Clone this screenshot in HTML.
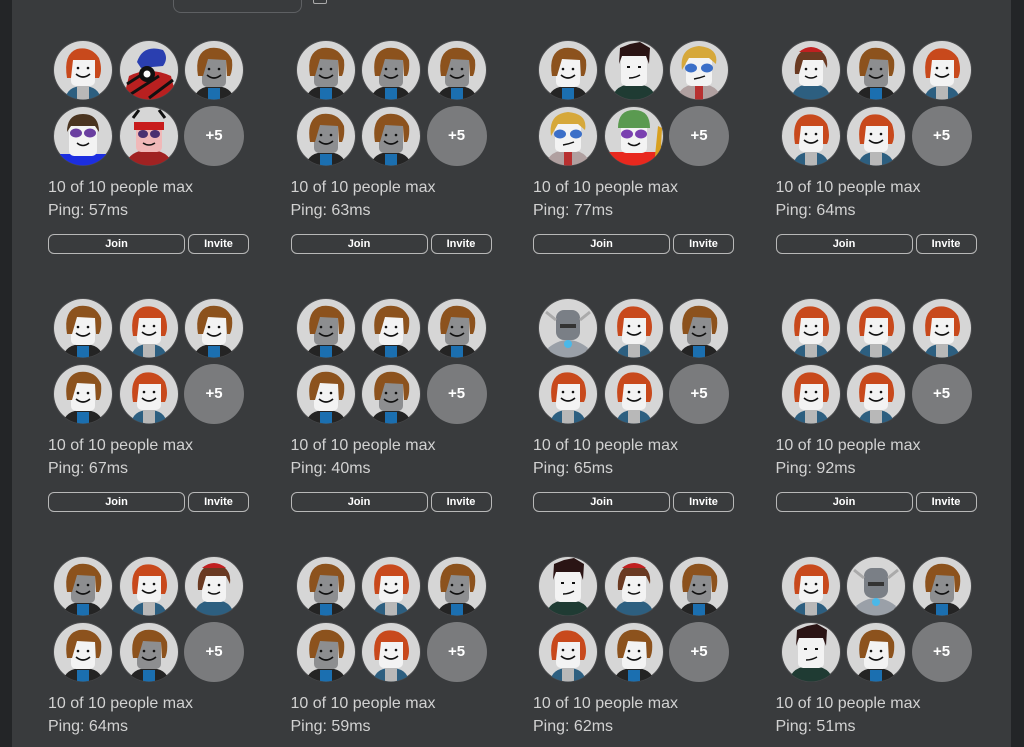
<!DOCTYPE html>
<html><head><meta charset="utf-8"><style>
html,body{margin:0;padding:0;width:1024px;height:747px;overflow:hidden;background:#232527;font-family:"Liberation Sans",sans-serif}
#panel{position:absolute;left:12px;top:0;width:999px;height:747px;background:#393b3d}
#cards{position:absolute;left:0;top:0;width:1024px;height:747px;overflow:hidden}
.card{position:absolute;width:202px;height:260px}
.av{position:absolute;width:60px;height:60px}
.more{position:absolute;width:60px;height:60px;border-radius:50%;background:#7a7b7d;color:#fff;font-size:15px;line-height:60px;text-align:center;font-weight:bold}
.t1,.t2{position:absolute;left:0;color:#d2d2d2;font-size:16px;white-space:nowrap}
.t1{top:178px}.t2{top:201px}
.btn{position:absolute;top:193px;height:20px;border:1px solid #b8b8b8;border-radius:6px;color:#fff;font-size:11px;font-weight:bold;text-align:center;line-height:18px;box-sizing:border-box}
</style></head><body>
<svg width="0" height="0" style="position:absolute">
<defs>
<clipPath id="cc"><circle cx="30" cy="30" r="29.5"/></clipPath>
<g id="base"><circle cx="30" cy="30" r="30" fill="#4a4b4d"/><circle cx="30" cy="30" r="29" fill="#d6d6d6"/></g>
<symbol id="o" viewBox="0 0 60 60"><use href="#base"/><g clip-path="url(#cc)"><path d="M12 60 Q14 46 30 46 Q46 46 48 60Z" fill="#2d5f80"/><rect x="24" y="46" width="12" height="14" fill="#b8b8b8"/><rect x="18" y="14" width="24" height="32" rx="5" fill="#f3f3f3"/><path d="M14 38 Q10 14 24 9 Q38 6 46 18 Q50 30 46 38 L42 38 L42 20 L20 20 L18 38Z" fill="#c8491c"/><path d="M23 34 Q30 40 37 34" stroke="#111" stroke-width="1.6" fill="none"/><circle cx="25" cy="28" r="1.3" fill="#111"/><circle cx="35" cy="28" r="1.3" fill="#111"/></g></symbol>
<symbol id="b" viewBox="0 0 60 60"><use href="#base"/><g clip-path="url(#cc)"><path d="M10 60 Q12 46 30 46 Q48 46 50 60Z" fill="#242424"/><rect x="24" y="48" width="12" height="12" fill="#1b6fb0"/><rect x="18" y="14" width="24" height="33" rx="5" fill="#8d8e90"/><path d="M14 36 Q10 12 26 8 Q42 6 48 20 Q49 30 46 36 L43 36 L42 20 L24 19 L19 36Z" fill="#8c521d"/><path d="M23 35 Q30 41 37 35" stroke="#111" stroke-width="1.6" fill="none"/><circle cx="25" cy="29" r="1.3" fill="#111"/><circle cx="35" cy="29" r="1.3" fill="#111"/></g></symbol>
<symbol id="w" viewBox="0 0 60 60"><use href="#base"/><g clip-path="url(#cc)"><path d="M10 60 Q12 46 30 46 Q48 46 50 60Z" fill="#242424"/><rect x="24" y="48" width="12" height="12" fill="#1b6fb0"/><rect x="18" y="14" width="24" height="33" rx="5" fill="#f3f3f3"/><path d="M14 36 Q10 12 26 8 Q42 6 48 20 Q49 30 46 36 L43 36 L42 20 L24 19 L19 36Z" fill="#8c521d"/><path d="M23 35 Q30 41 37 35" stroke="#111" stroke-width="1.6" fill="none"/><circle cx="25" cy="29" r="1.3" fill="#111"/><circle cx="35" cy="29" r="1.3" fill="#111"/></g></symbol>
<symbol id="x" viewBox="0 0 60 60"><use href="#base"/><g clip-path="url(#cc)"><path d="M4 60 L10 36 Q30 26 52 36 L58 60Z" fill="#b82020"/><path d="M8 44 L30 30 M12 54 L40 36 M30 58 L54 40" stroke="#111" stroke-width="3"/><path d="M18 22 Q24 4 44 10 Q50 18 44 26 L22 28Z" fill="#2a3fb0"/><circle cx="28" cy="34" r="8" fill="#111"/><circle cx="28" cy="34" r="3.5" fill="#fff"/></g></symbol>
<symbol id="s" viewBox="0 0 60 60"><use href="#base"/><g clip-path="url(#cc)"><rect x="0" y="48" width="60" height="12" fill="#1c2ee0"/><rect x="16" y="14" width="28" height="36" rx="5" fill="#f3f3f3"/><path d="M14 26 Q14 8 30 8 Q46 8 46 26 L42 20 L18 20Z" fill="#4a3420"/><ellipse cx="23" cy="27" rx="6" ry="4.5" fill="#6a3fa0"/><ellipse cx="37" cy="27" rx="6" ry="4.5" fill="#6a3fa0"/><path d="M24 37 Q30 42 36 37" stroke="#111" stroke-width="1.5" fill="none"/></g></symbol>
<symbol id="p" viewBox="0 0 60 60"><use href="#base"/><g clip-path="url(#cc)"><path d="M6 60 Q10 44 30 44 Q50 44 54 60Z" fill="#a02222"/><rect x="17" y="16" width="26" height="30" rx="5" fill="#f0b8b8"/><rect x="15" y="16" width="30" height="8" fill="#c81c1c"/><path d="M14 12 L20 4 M46 12 L40 4" stroke="#111" stroke-width="3"/><ellipse cx="24" cy="28" rx="5" ry="4" fill="#4a3070"/><ellipse cx="36" cy="28" rx="5" ry="4" fill="#4a3070"/><path d="M24 37 Q30 41 36 37" stroke="#111" stroke-width="1.5" fill="none"/></g></symbol>
<symbol id="d" viewBox="0 0 60 60"><use href="#base"/><g clip-path="url(#cc)"><path d="M8 60 Q10 44 30 44 Q50 44 52 60Z" fill="#1f3b33"/><rect x="17" y="14" width="26" height="32" rx="5" fill="#f3f3f3"/><path d="M15 24 L16 8 L26 4 L36 2 L46 8 L45 24 L42 16 L18 16Z" fill="#2a1414"/><path d="M25 38 Q31 38 36 35" stroke="#111" stroke-width="1.4" fill="none"/><rect x="23" y="26" width="3" height="2" fill="#111"/><rect x="34" y="26" width="3" height="2" fill="#111"/></g></symbol>
<symbol id="y" viewBox="0 0 60 60"><use href="#base"/><g clip-path="url(#cc)"><path d="M8 60 Q10 44 30 44 Q50 44 52 60Z" fill="#b0a0a0"/><rect x="26" y="46" width="8" height="14" fill="#b83030"/><rect x="17" y="14" width="26" height="32" rx="5" fill="#f3f3f3"/><path d="M13 30 Q10 8 30 6 Q50 8 47 24 L40 18 L20 18Z" fill="#d6a83a"/><ellipse cx="22" cy="28" rx="6" ry="4.5" fill="#3b6fc8"/><ellipse cx="38" cy="28" rx="6" ry="4.5" fill="#3b6fc8"/><path d="M25 39 Q31 38 36 36" stroke="#111" stroke-width="1.4" fill="none"/></g></symbol>
<symbol id="g" viewBox="0 0 60 60"><use href="#base"/><g clip-path="url(#cc)"><rect x="0" y="46" width="60" height="14" fill="#e8281e"/><rect x="17" y="14" width="26" height="33" rx="5" fill="#f3f3f3"/><path d="M14 22 Q14 4 30 4 Q46 4 46 22Z" fill="#5a9a50"/><path d="M50 60 L54 20 L58 22 L56 60Z" fill="#d8a020"/><ellipse cx="23" cy="28" rx="6" ry="4.5" fill="#7a40b0"/><ellipse cx="37" cy="28" rx="6" ry="4.5" fill="#7a40b0"/><path d="M24 37 Q30 42 36 37" stroke="#111" stroke-width="1.5" fill="none"/></g></symbol>
<symbol id="r" viewBox="0 0 60 60"><use href="#base"/><g clip-path="url(#cc)"><path d="M10 60 Q12 44 30 44 Q48 44 50 60Z" fill="#2d5f80"/><rect x="18" y="14" width="24" height="32" rx="5" fill="#f3f3f3"/><path d="M14 34 Q12 10 30 8 Q48 10 46 28 L42 20 L22 20 L18 34Z" fill="#6a3a22"/><path d="M18 12 Q30 2 42 12Z" fill="#c02020"/><path d="M24 36 Q30 40 36 36" stroke="#111" stroke-width="1.4" fill="none"/><circle cx="25" cy="29" r="1.3" fill="#111"/><circle cx="35" cy="29" r="1.3" fill="#111"/></g></symbol>
<symbol id="k" viewBox="0 0 60 60"><use href="#base"/><g clip-path="url(#cc)"><path d="M10 50 Q30 34 50 50 L44 60 L16 60Z" fill="#9aa0a8"/><rect x="18" y="12" width="24" height="30" rx="8" fill="#7a7f86"/><path d="M8 14 L18 22 M52 14 L42 22" stroke="#aaa" stroke-width="3"/><circle cx="30" cy="46" r="4" fill="#4ab8e8"/><rect x="22" y="26" width="16" height="4" fill="#333"/></g></symbol>
</defs></svg>
<div id="panel">
<div style="position:absolute;left:161px;top:-10px;width:127px;height:21px;border:1px solid #5e6063;border-radius:8px"></div>
<div style="position:absolute;left:301px;top:-6px;width:12px;height:8px;border:1px solid #aaa;border-radius:2px"></div>
</div>
<div id="cards"></div>
<script>
var data=[["oxbsp","bbbbb","wdyyg","rboooo"],["wowwo","bwbwb","kobooo","ooooo"],["borwb","bobbo","drbow","okbdw"]];
var pings=[[57,63,77,64],[67,40,65,92],[64,59,62,51]];
var cx=[48,290.5,533,775.5],h="";
for(var r=0;r<3;r++)for(var c=0;c<4;c++){
var L=cx[c],T=r*258,s=data[r][c];
h+='<div class="card" style="left:'+L+'px;top:'+T+'px">';
var pos=[[5,40],[70.5,40],[136,40],[5,106],[70.5,106]];
for(var i=0;i<5;i++)h+='<svg class="av" viewBox="0 0 60 60" style="left:'+pos[i][0]+'px;top:'+pos[i][1]+'px"><use href="#'+s[i]+'"/></svg>';
h+='<div class="more" style="left:136px;top:106px">+5</div>';
h+='<div class="t1" style="top:179px">10 of 10 people max</div><div class="t2" style="top:202px">Ping: '+pings[r][c]+'ms</div>';
h+='<div class="btn" style="left:0;top:234px;width:137px">Join</div><div class="btn" style="left:140px;top:234px;width:61px">Invite</div></div>';}
document.getElementById("cards").innerHTML=h;
</script>
</body></html>
